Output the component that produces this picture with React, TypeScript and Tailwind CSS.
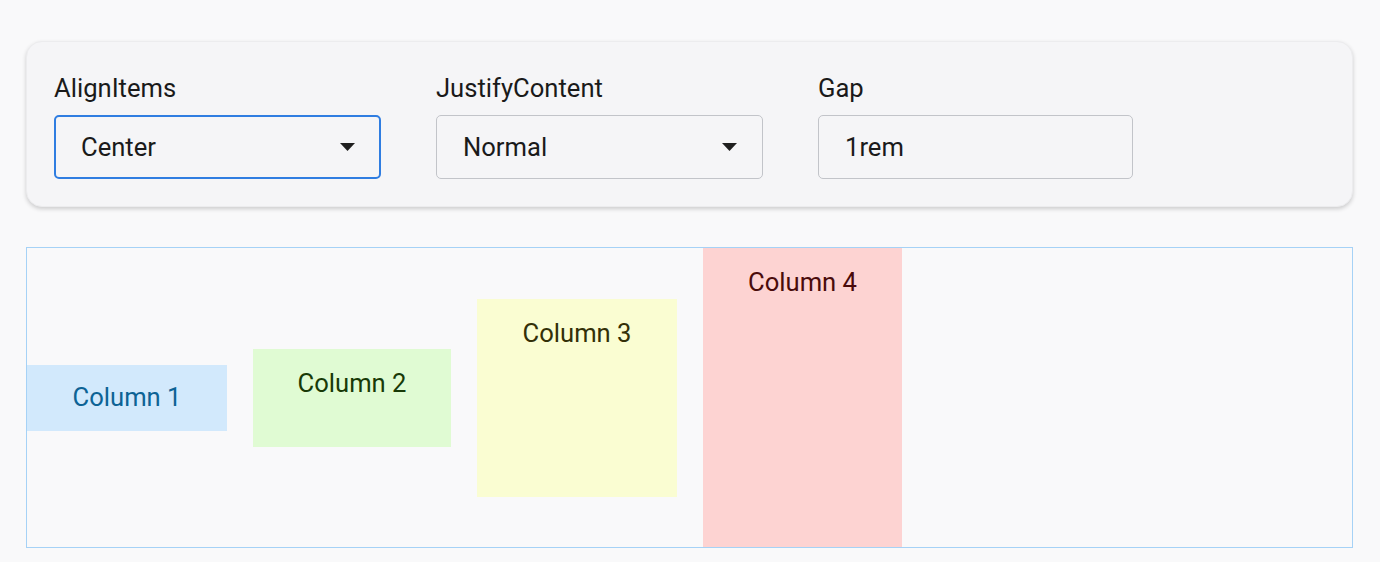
import React from "react";

function Arrow() {
  return (
    <svg width="15" height="8" viewBox="0 0 15 8" className="shrink-0">
      <path d="M0 0 L15 0 L7.5 8 Z" fill="#1f1f1f" />
    </svg>
  );
}

export default function App() {
  return (
    <div
      className="min-h-[562px] w-full bg-[#f9f9fa] pt-[41px] pl-[26px] pr-[27px]"
      style={{ fontFamily: "Roboto, 'Liberation Sans', sans-serif" }}
    >
      <div className="rounded-[16px] bg-[#f5f5f7] border border-[#ececee] shadow-[0_2px_4px_rgba(0,0,0,0.18)] pt-[31px] pb-[27px] pl-[27px] flex gap-[55px]">
        <div className="flex flex-col">
          <div className="text-[25.6px] leading-[30px] text-[#1a1a1a] mb-[12px]">AlignItems</div>
          <div className="w-[327px] h-[64px] rounded-[5px] border-2 border-[#2f7de1] flex items-center justify-between pl-[25px] pr-[24px]">
            <span className="text-[25.6px] text-[#1a1a1a]">Center</span>
            <Arrow />
          </div>
        </div>
        <div className="flex flex-col">
          <div className="text-[25.6px] leading-[30px] text-[#1a1a1a] mb-[12px]">JustifyContent</div>
          <div className="w-[327px] h-[64px] rounded-[5px] border border-[#c2c4c9] flex items-center justify-between pl-[26px] pr-[25px]">
            <span className="text-[25.6px] text-[#1a1a1a]">Normal</span>
            <Arrow />
          </div>
        </div>
        <div className="flex flex-col">
          <div className="text-[25.6px] leading-[30px] text-[#1a1a1a] mb-[12px]">Gap</div>
          <div className="w-[315px] h-[64px] rounded-[5px] border border-[#c2c4c9] flex items-center pl-[26px]">
            <span className="text-[25.6px] text-[#1a1a1a]">1rem</span>
          </div>
        </div>
      </div>

      <div className="mt-[40px] h-[301px] border border-[#a6d2f6] flex items-center gap-[26px]">
        <div className="w-[200px] h-[66px] bg-[#d2e9fc] flex items-center justify-center text-[25.6px] text-[#0d6395]">
          Column 1
        </div>
        <div className="w-[198px] h-[98px] bg-[#e0fbd3] flex justify-center pt-[19px] text-[25.6px] leading-[30px] text-[#183a07]">
          Column 2
        </div>
        <div className="w-[200px] h-[198px] bg-[#fafdd2] flex justify-center pt-[19px] text-[25.6px] leading-[30px] text-[#333008]">
          Column 3
        </div>
        <div className="w-[199px] h-[299px] bg-[#fdd3d2] flex justify-center pt-[19px] text-[25.6px] leading-[30px] text-[#4a0b0b]">
          Column 4
        </div>
      </div>
    </div>
  );
}
